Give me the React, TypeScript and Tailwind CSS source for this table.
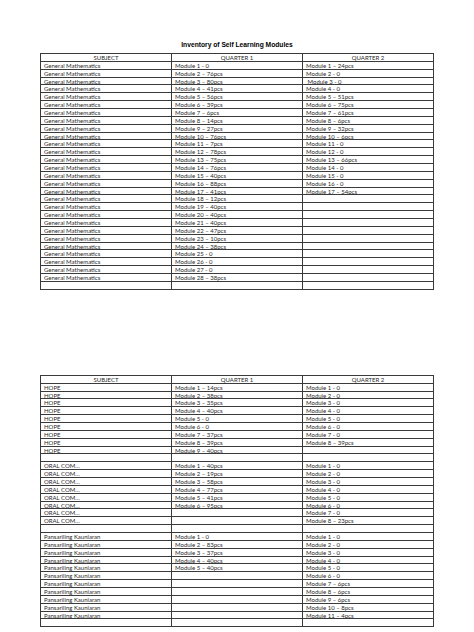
const gm = [
  ['Module 1 - 0', 'Module 1 – 24pcs'],
  ['Module 2 – 76pcs', 'Module 2 - 0'],
  ['Module 3 – 80pcs', ' Module 3 - 0'],
  ['Module 4 – 41pcs', 'Module 4 - 0'],
  ['Module 5 – 56pcs', 'Module 5 – 51pcs'],
  ['Module 6 – 39pcs', 'Module 6 – 75pcs'],
  ['Module 7 – 6pcs', 'Module 7 – 61pcs'],
  ['Module 8 – 14pcs', 'Module 8 – 6pcs'],
  ['Module 9 – 27pcs', 'Module 9 – 32pcs'],
  ['Module 10 – 76pcs', 'Module 10 – 6pcs'],
  ['Module 11 – 7pcs', 'Module 11 - 0'],
  ['Module 12 – 78pcs', 'Module 12 - 0'],
  ['Module 13 – 75pcs', 'Module 13 – 66pcs'],
  ['Module 14 – 76pcs', 'Module 14 - 0'],
  ['Module 15 – 40pcs', 'Module 15 - 0'],
  ['Module 16 – 88pcs', 'Module 16 - 0'],
  ['Module 17 – 41pcs', 'Module 17 – 54pcs'],
  ['Module 18 – 12pcs', ''],
  ['Module 19 – 40pcs', ''],
  ['Module 20 – 40pcs', ''],
  ['Module 21 – 40pcs', ''],
  ['Module 22 – 47pcs', ''],
  ['Module 23 – 10pcs', ''],
  ['Module 24 – 38pcs', ''],
  ['Module 25 - 0', ''],
  ['Module 26 - 0', ''],
  ['Module 27 - 0', ''],
  ['Module 28 – 38pcs', ''],
].map(([a, b]) => ['General Mathematics', a, b]);

const hope = [
  ['Module 1 – 14pcs', 'Module 1 - 0'],
  ['Module 2 – 38pcs', 'Module 2 - 0'],
  ['Module 3 – 35pcs', 'Module 3 - 0'],
  ['Module 4 – 40pcs', 'Module 4 - 0'],
  ['Module 5 - 0', 'Module 5 - 0'],
  ['Module 6 - 0', 'Module 6 - 0'],
  ['Module 7 – 37pcs', 'Module 7 - 0'],
  ['Module 8 – 39pcs', 'Module 8 – 39pcs'],
  ['Module 9 – 40pcs', ''],
].map(([a, b]) => ['HOPE', a, b]);

const oral = [
  ['Module 1 – 40pcs', 'Module 1 - 0'],
  ['Module 2 – 19pcs', 'Module 2 - 0'],
  ['Module 3 – 58pcs', 'Module 3 - 0'],
  ['Module 4 – 77pcs', 'Module 4 - 0'],
  ['Module 5 – 41pcs', 'Module 5 - 0'],
  ['Module 6 – 95pcs', 'Module 6 - 0'],
  ['', 'Module 7 - 0'],
  ['', 'Module 8 – 23pcs'],
].map(([a, b]) => ['ORAL COM…', a, b]);

const pk = [
  ['Module 1 - 0', 'Module 1 - 0'],
  ['Module 2 – 83pcs', 'Module 2 - 0'],
  ['Module 3 – 37pcs', 'Module 3 - 0'],
  ['Module 4 – 40pcs', 'Module 4 - 0'],
  ['Module 5 – 40pcs', 'Module 5 - 0'],
  ['', 'Module 6 - 0'],
  ['', 'Module 7 – 6pcs'],
  ['', 'Module 8 – 6pcs'],
  ['', 'Module 9 – 6pcs'],
  ['', 'Module 10 – 8pcs'],
  ['', 'Module 11 – 4pcs'],
].map(([a, b]) => ['Pansariling Kaunlaran', a, b]);

const blank = ['', '', ''];

function SheetTable({ rows }: { rows: string[][] }) {
  return (
    <div className="mx-[40px] grid grid-cols-3 border-l border-t border-[#3a3a3a] text-[6px] leading-[7px] text-[#2a2a2a]">
      {['SUBJECT', 'QUARTER 1', 'QUARTER 2'].map((h) => (
        <div key={h} className="h-[7.87px] overflow-hidden border-b border-r border-[#3a3a3a] text-center">
          {h}
        </div>
      ))}
      {rows.map((row, i) =>
        row.map((cell, j) => (
          <div
            key={`${i}-${j}`}
            className="h-[7.87px] overflow-hidden whitespace-pre border-b border-r border-[#3a3a3a] pl-[3px]"
          >
            {cell}
          </div>
        ))
      )}
    </div>
  );
}

export default function App() {
  return (
    <div className="min-h-[632px] w-[474px] bg-white pt-[41px] font-['Lato',sans-serif]">
      <h1 className="mb-[4px] text-center font-['Liberation_Sans',Arial,sans-serif] text-[6.7px] font-bold leading-[8px] text-black">
        Inventory of Self Learning Modules
      </h1>
      <SheetTable rows={[...gm, blank]} />
      <div className="h-[85px]" />
      <SheetTable rows={[...hope, blank, ...oral, blank, ...pk, blank]} />
    </div>
  );
}
